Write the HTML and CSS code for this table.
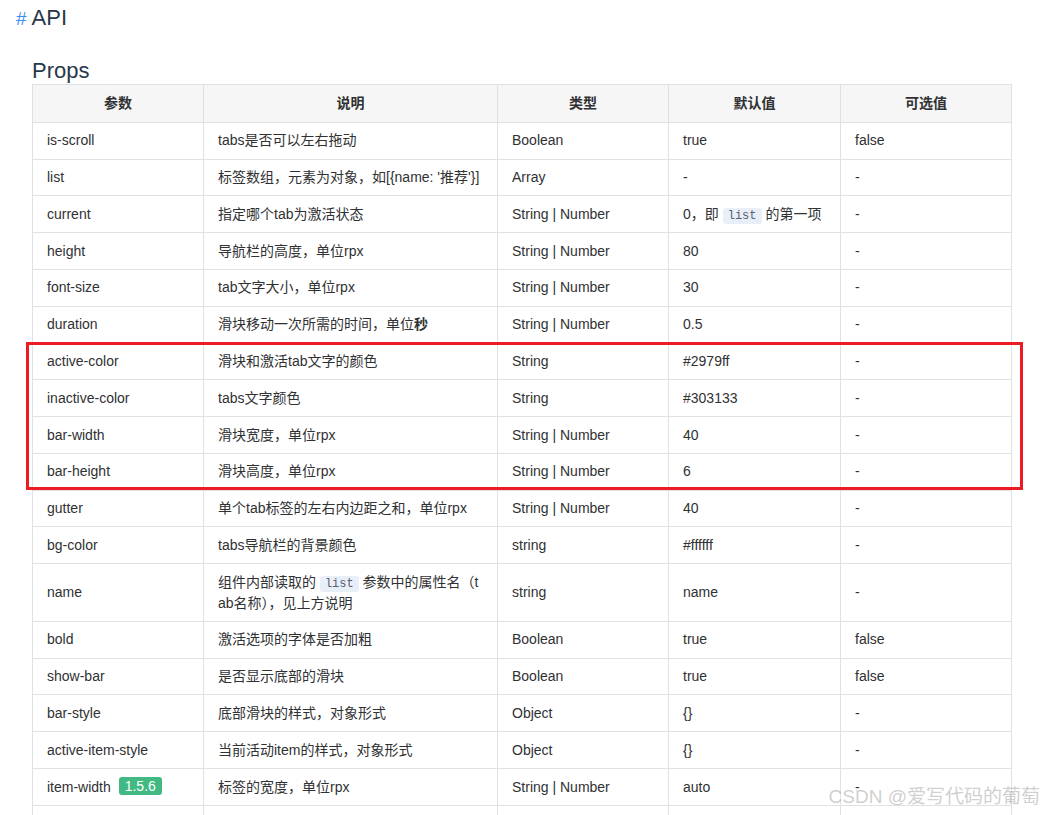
FILE: index.html
```html
<!DOCTYPE html>
<html lang="zh-CN">
<head>
<meta charset="utf-8">
<title>API</title>
<link rel="stylesheet" href="styles.css">
</head>
<body>
<div class="page">
  <h1 class="title"><span class="anchor">#</span>API</h1>
  <h2 class="subtitle">Props</h2>
  <table class="props">
    <colgroup>
      <col class="c1"><col class="c2"><col class="c3"><col class="c4"><col class="c5">
    </colgroup>
    <thead>
      <tr><th>参数</th><th>说明</th><th>类型</th><th>默认值</th><th>可选值</th></tr>
    </thead>
    <tbody>
      <tr><td>is-scroll</td><td>tabs是否可以左右拖动</td><td>Boolean</td><td>true</td><td>false</td></tr>
      <tr><td>list</td><td>标签数组，元素为对象，如[{name: '推荐'}]</td><td>Array</td><td>-</td><td>-</td></tr>
      <tr><td>current</td><td>指定哪个tab为激活状态</td><td>String | Number</td><td>0，即 <code>list</code> 的第一项</td><td>-</td></tr>
      <tr><td>height</td><td>导航栏的高度，单位rpx</td><td>String | Number</td><td>80</td><td>-</td></tr>
      <tr><td>font-size</td><td>tab文字大小，单位rpx</td><td>String | Number</td><td>30</td><td>-</td></tr>
      <tr><td>duration</td><td>滑块移动一次所需的时间，单位<strong>秒</strong></td><td>String | Number</td><td>0.5</td><td>-</td></tr>
      <tr><td>active-color</td><td>滑块和激活tab文字的颜色</td><td>String</td><td>#2979ff</td><td>-</td></tr>
      <tr><td>inactive-color</td><td>tabs文字颜色</td><td>String</td><td>#303133</td><td>-</td></tr>
      <tr><td>bar-width</td><td>滑块宽度，单位rpx</td><td>String | Number</td><td>40</td><td>-</td></tr>
      <tr><td>bar-height</td><td>滑块高度，单位rpx</td><td>String | Number</td><td>6</td><td>-</td></tr>
      <tr><td>gutter</td><td>单个tab标签的左右内边距之和，单位rpx</td><td>String | Number</td><td>40</td><td>-</td></tr>
      <tr><td>bg-color</td><td>tabs导航栏的背景颜色</td><td>string</td><td>#ffffff</td><td>-</td></tr>
      <tr><td>name</td><td>组件内部读取的 <code>list</code> 参数中的属性名（t<br>ab名称），见上方说明</td><td>string</td><td>name</td><td>-</td></tr>
      <tr><td>bold</td><td>激活选项的字体是否加粗</td><td>Boolean</td><td>true</td><td>false</td></tr>
      <tr><td>show-bar</td><td>是否显示底部的滑块</td><td>Boolean</td><td>true</td><td>false</td></tr>
      <tr><td>bar-style</td><td>底部滑块的样式，对象形式</td><td>Object</td><td>{}</td><td>-</td></tr>
      <tr><td>active-item-style</td><td>当前活动item的样式，对象形式</td><td>Object</td><td>{}</td><td>-</td></tr>
      <tr><td>item-width <span class="badge">1.5.6</span></td><td>标签的宽度，单位rpx</td><td>String | Number</td><td>auto</td><td>-</td></tr>
      <tr><td>&nbsp;</td><td>&nbsp;</td><td>&nbsp;</td><td>&nbsp;</td><td>&nbsp;</td></tr>
    </tbody>
  </table>
</div>
<div class="highlight"></div>
<div class="watermark">CSDN @爱写代码的葡萄</div>
</body>
</html>
```
FILE: styles.css
```css
html, body {
  margin: 0;
  padding: 0;
  background: #fff;
}
body {
  font-family: "Liberation Sans", Arial, "Noto Sans CJK SC", sans-serif;
  color: #2c3e50;
  height: 815px;
  overflow: hidden;
  position: relative;
}
.page {
  padding: 0 32px;
}
.title {
  margin: 0 0 0 -16px;
  padding-top: 6px;
  font-size: 22px;
  line-height: 24px;
  font-weight: normal;
  color: #273849;
}
.anchor {
  color: #3c8cf0;
  font-size: 19px;
  margin-right: 5px;
}
.subtitle {
  margin: 28px 0 1px;
  font-size: 22px;
  line-height: 24px;
  font-weight: normal;
  color: #273849;
}
.props {
  border-collapse: collapse;
  table-layout: fixed;
  width: 979px;
  font-size: 14px;
}
.c1 { width: 171px; }
.c2 { width: 294px; }
.c3 { width: 171px; }
.c4 { width: 172px; }
.c5 { width: 171px; }
.props th, .props td {
  border: 1px solid #dfe2e5;
  padding: 7.5px 14px;
  line-height: 20.8px;
  text-align: left;
  vertical-align: middle;
  color: #303133;
}
.props th {
  background: #f6f6f6;
  text-align: center;
  font-weight: bold;
  padding: 8px 14px;
  line-height: 20.7px;
}
.props strong {
  font-weight: bold;
}
.props code {
  font-family: "Liberation Mono", "Courier New", monospace;
  font-size: 12px;
  padding: 0 5px;
  line-height: 16px;
  display: inline-block;
  background: #e9eff9;
  color: #56606e;
  border-radius: 3px;
}
.badge {
  display: inline-block;
  font-size: 14px;
  height: 18px;
  line-height: 18px;
  padding: 0 6px;
  margin-left: 4px;
  border-radius: 3px;
  background: #42b983;
  color: #fff;
  vertical-align: top;
}
.highlight {
  position: absolute;
  left: 26px;
  top: 342px;
  width: 997px;
  height: 148px;
  box-sizing: border-box;
  border: 3px solid #ed1c24;
}
.watermark {
  position: absolute;
  right: 4px;
  top: 786px;
  font-size: 19px;
  line-height: 22px;
  color: rgba(130, 130, 130, 0.4);
  white-space: nowrap;
}
```
